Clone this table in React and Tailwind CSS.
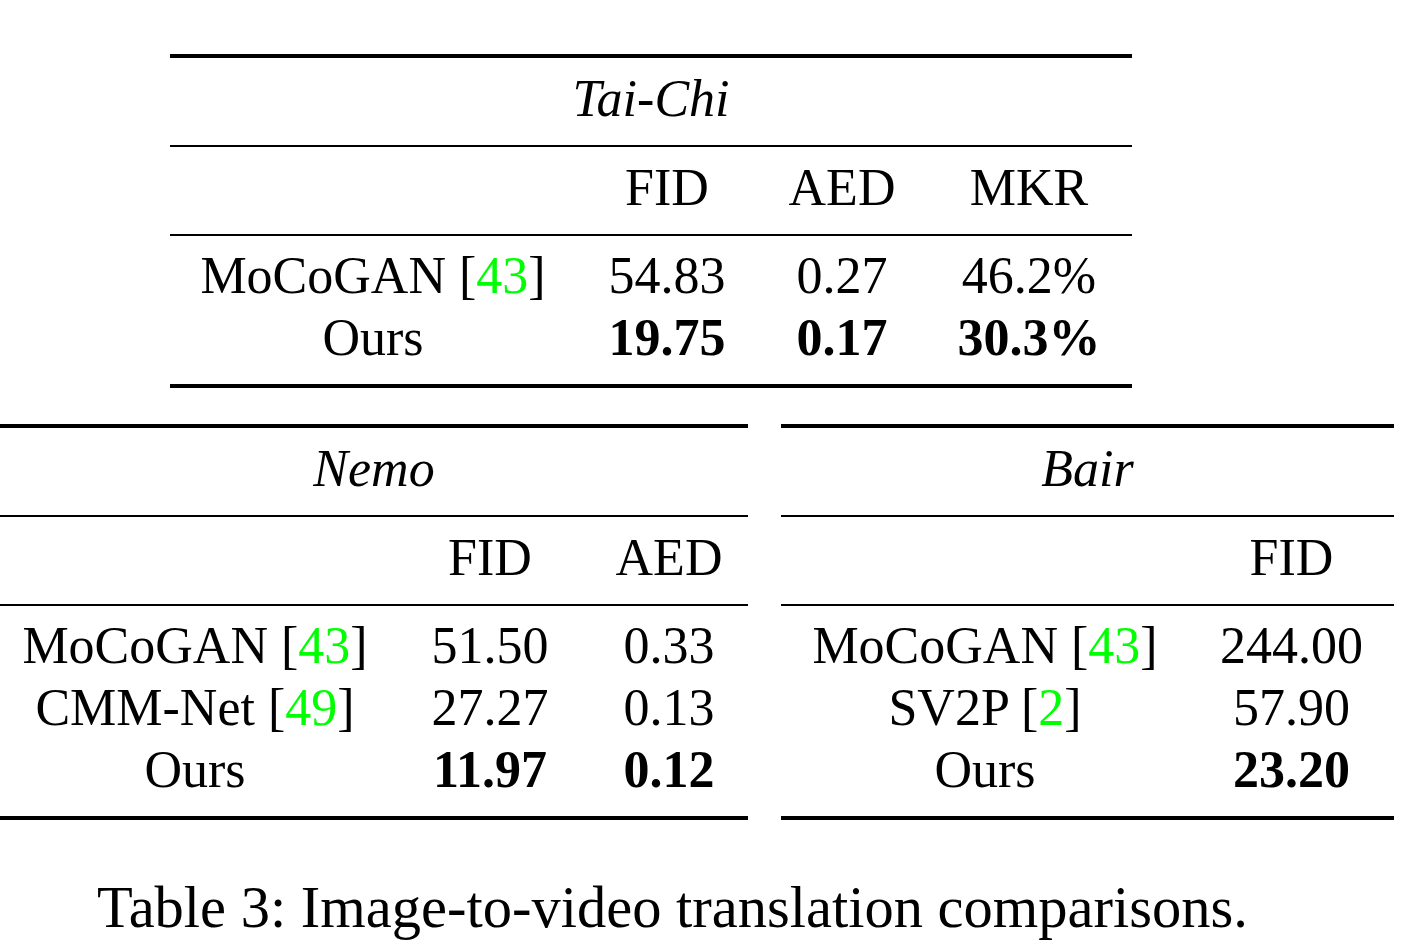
const Cite = ({ n }) => (
  <>
    [<span className="text-[#00ff00]">{n}</span>]
  </>
)

const Thick = () => <div className="h-[4px] bg-black" />
const Thin = () => <div className="h-[2px] bg-black" />

function ResultTable({ title, cols, header, rows, className }) {
  return (
    <div className={className}>
      <Thick />
      <div className="pt-[10px] pb-[15px] text-center italic">{title}</div>
      <Thin />
      <div className={`grid ${cols} pt-[10px] pb-[15px] text-center`}>
        <div></div>
        {header.map((h) => (
          <div key={h}>{h}</div>
        ))}
      </div>
      <Thin />
      <div className={`grid ${cols} pt-[9px] pb-[15px] text-center`}>
        {rows.map((row, i) =>
          row.map((cell, j) => (
            <div key={i + "-" + j} className={row.bold && j > 0 ? "font-bold" : ""}>
              {cell}
            </div>
          ))
        )}
      </div>
      <Thick />
    </div>
  )
}

const bold = (arr) => Object.assign(arr, { bold: true })

export default function App() {
  return (
    <div className="w-[1418px] h-[946px] bg-white text-black overflow-hidden font-['Liberation_Serif','Times_New_Roman',serif] text-[52px] leading-[62px]">
      <div className="pt-[54px] pl-[170px]">
        <ResultTable
          className="w-[962px]"
          title="Tai-Chi"
          cols="grid-cols-[406px_182px_168px_206px]"
          header={["FID", "AED", "MKR"]}
          rows={[
            [<>MoCoGAN <Cite n="43" /></>, "54.83", "0.27", "46.2%"],
            bold(["Ours", "19.75", "0.17", "30.3%"]),
          ]}
        />
      </div>

      <div className="flex gap-[33px] mt-[36px]">
        <ResultTable
          className="w-[748px]"
          title="Nemo"
          cols="grid-cols-[390px_200px_158px]"
          header={["FID", "AED"]}
          rows={[
            [<>MoCoGAN <Cite n="43" /></>, "51.50", "0.33"],
            [<>CMM-Net <Cite n="49" /></>, "27.27", "0.13"],
            bold(["Ours", "11.97", "0.12"]),
          ]}
        />
        <ResultTable
          className="w-[613px]"
          title="Bair"
          cols="grid-cols-[408px_205px]"
          header={["FID"]}
          rows={[
            [<>MoCoGAN <Cite n="43" /></>, "244.00"],
            [<>SV2P <Cite n="2" /></>, "57.90"],
            bold(["Ours", "23.20"]),
          ]}
        />
      </div>

      <p className="mt-[57px] pl-[97px] text-[58.5px] leading-[62px]">
        Table 3: Image-to-video translation comparisons.
      </p>
    </div>
  )
}
